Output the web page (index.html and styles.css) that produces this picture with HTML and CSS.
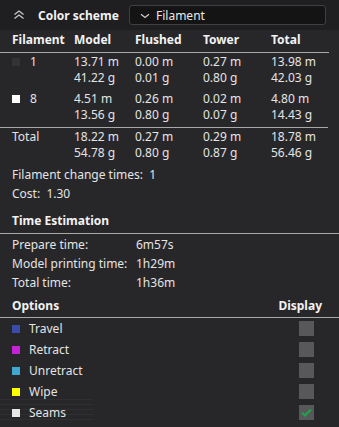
FILE: index.html
```html
<!DOCTYPE html>
<html lang="en">
<head>
    <meta charset="utf-8">
    <title>Color scheme</title>
    <link rel="stylesheet" href="styles.css">
</head>
<body>
<div class="panel">
    <div class="topbar">
        <svg class="collapse-icon" width="12" height="10" viewBox="0 0 12 10">
            <path d="M1.5 4.5 L6 1 L10.5 4.5 M1.5 8.5 L6 5 L10.5 8.5" fill="none" stroke="#c8c8c8" stroke-width="1.3"/>
        </svg>
        <span class="topbar-title">Color scheme</span>
        <div class="select">
            <svg class="select-arrow" width="10" height="6" viewBox="0 0 10 6">
                <path d="M1 1.2 L5 4.5 L9 1.2" fill="none" stroke="#d0d0d0" stroke-width="1.2"/>
            </svg>
            <span>Filament</span>
        </div>
    </div>

    <div class="grid thead">
        <span>Filament</span>
        <span>Model</span>
        <span>Flushed</span>
        <span>Tower</span>
        <span>Total</span>
    </div>

    <div class="tbody">
        <div class="grid row">
            <span class="fil"><i class="swatch" style="background:#333335"></i>1</span>
            <span>13.71 m<br>41.22 g</span>
            <span>0.00 m<br>0.01 g</span>
            <span>0.27 m<br>0.80 g</span>
            <span>13.98 m<br>42.03 g</span>
        </div>
        <div class="grid row">
            <span class="fil"><i class="swatch" style="background:#ffffff"></i>8</span>
            <span>4.51 m<br>13.56 g</span>
            <span>0.26 m<br>0.80 g</span>
            <span>0.02 m<br>0.07 g</span>
            <span>4.80 m<br>14.43 g</span>
        </div>
    </div>

    <div class="grid row total-row">
        <span>Total</span>
        <span>18.22 m<br>54.78 g</span>
        <span>0.27 m<br>0.80 g</span>
        <span>0.29 m<br>0.87 g</span>
        <span>18.78 m<br>56.46 g</span>
    </div>

    <div class="info">
        <div>Filament change times:&nbsp;&nbsp;1</div>
        <div>Cost:&nbsp;&nbsp;1.30</div>
    </div>

    <div class="section-title">Time Estimation</div>
    <div class="times">
        <div class="time-row"><span class="time-label">Prepare time:</span><span>6m57s</span></div>
        <div class="time-row"><span class="time-label">Model printing time:</span><span>1h29m</span></div>
        <div class="time-row"><span class="time-label">Total time:</span><span>1h36m</span></div>
    </div>

    <div class="section-title options-head">
        <span>Options</span>
        <span>Display</span>
    </div>
    <div class="options">
        <div class="opt"><i class="swatch" style="background:#3c4aa8"></i><span class="opt-name">Travel</span><span class="check"></span></div>
        <div class="opt"><i class="swatch" style="background:#c621d8"></i><span class="opt-name">Retract</span><span class="check"></span></div>
        <div class="opt"><i class="swatch" style="background:#40a8d0"></i><span class="opt-name">Unretract</span><span class="check"></span></div>
        <div class="opt"><i class="swatch" style="background:#ffff00"></i><span class="opt-name">Wipe</span><span class="check"></span></div>
        <div class="opt"><i class="swatch" style="background:#e6e6e6"></i><span class="opt-name">Seams</span>
            <span class="check">
                <svg width="15" height="15" viewBox="0 0 15 15">
                    <path d="M3 7.8 L6 10.5 L12 4.5" fill="none" stroke="#1fa34a" stroke-width="2.2"/>
                </svg>
            </span>
        </div>
    </div>
</div>
</body>
</html>
```

FILE: styles.css
```css
* {
    margin: 0px;
    padding: 0px;
    box-sizing: border-box;
}

body {
    width: 339px;
    height: 427px;
    overflow: hidden;
    background-color: #27272a;
    color: #e4e4e4;
    font-family: "Noto Sans", "Open Sans", sans-serif;
    font-size: 12px;
    white-space: nowrap;
}

.panel {
    display: flex;
    flex-direction: column;
}

.topbar {
    display: flex;
    align-items: center;
    height: 30px;
    padding-left: 13px;
    background-color: #1f1f21;
}

.collapse-icon {
    display: block;
    margin-right: 13px;
}

.topbar-title {
    font-weight: bold;
    color: #f2f2f2;
}

.select {
    display: flex;
    align-items: center;
    width: 197px;
    height: 20px;
    margin-left: auto;
    margin-right: 13px;
    padding-left: 10px;
    background-color: #141415;
    border: 1px solid #404043;
    border-radius: 3px;
    color: #e8e8e8;
}

.select-arrow {
    display: block;
    margin-right: 6px;
    margin-top: 2px;
}

.grid {
    display: grid;
    grid-template-columns: 62px 61px 68px 68px 1fr;
    padding-left: 12px;
}

.thead {
    height: 23px;
    line-height: 20px;
    font-weight: bold;
    color: #f2f2f2;
    width: 329px;
    border-bottom: 1px solid #a8a8a8;
}

.tbody {
    margin: 1px 11px 0 0;
    padding-bottom: 4px;
    border-bottom: 1px solid #a8a8a8;
}

.row {
    line-height: 16px;
}

.row + .row {
    margin-top: 5px;
}

.fil {
    display: flex;
    align-items: flex-start;
}

.fil .swatch {
    margin-top: 4px;
    margin-right: 10px;
}

.swatch {
    display: inline-block;
    width: 8px;
    height: 8px;
}

.total-row {
    margin-top: 1px;
}

.info {
    margin-top: 4px;
    padding-left: 12px;
    line-height: 19px;
}

.section-title {
    margin-top: 8px;
    padding: 0 17px 3px 12px;
    line-height: 19px;
    font-weight: bold;
    color: #f2f2f2;
    border-bottom: 1px solid #a8a8a8;
}

.times {
    margin-top: 1px;
    padding-left: 12px;
    line-height: 19px;
}

.time-row {
    display: flex;
}

.time-label {
    width: 124px;
}

.options-head {
    display: flex;
    justify-content: space-between;
    margin-top: 4px;
    padding-bottom: 2px;
}

.options {
    background-image: repeating-linear-gradient(180deg, transparent 0px, transparent 4px, #2f2f32 4px, #2f2f32 5px);
    background-size: 93px 32px;
    background-position: 0 77px;
    background-repeat: no-repeat;
}

.opt {
    display: flex;
    align-items: center;
    height: 21px;
    padding-left: 12px;
}

.opt .swatch {
    margin-right: 9px;
}

.opt-name {
    flex: 1;
}

.check {
    display: block;
    width: 15px;
    height: 15px;
    margin-right: 25px;
    background-color: #58585a;
}

.check svg {
    display: block;
}
```
